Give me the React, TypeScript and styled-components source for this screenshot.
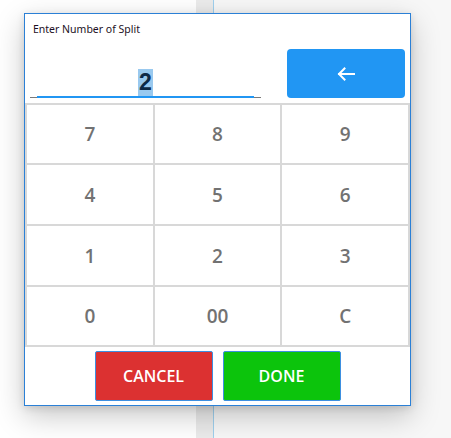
import React, { useState } from 'react';
import styled, { createGlobalStyle } from 'styled-components';

const GlobalStyle = createGlobalStyle`
  *, *::before, *::after {
    box-sizing: border-box;
  }
  html, body {
    margin: 0;
    padding: 0;
    background: #ffffff;
  }
  #root {
    width: 451px;
    height: 438px;
  }
`;

// backdrop: the page that sits behind the popup
const Page = styled.div`
  position: relative;
  width: 451px;
  height: 438px;
  display: flex;
  overflow: hidden;
`;

const LeftPane = styled.div`
  width: 196px;
  background: #ffffff;
`;

const Gutter = styled.div`
  width: 17px;
  background: #ebebeb;
`;

const Divider = styled.div`
  width: 1px;
  background: #9fd0ee;
`;

const RightPane = styled.div`
  flex: 1;
  background: #f7f7f7;
`;

const Dialog = styled.div`
  position: absolute;
  left: 24px;
  top: 13px;
  width: 387px;
  height: 393px;
  background: #ffffff;
  border: 1px solid #2b80d6;
  box-shadow: 0 10px 28px rgba(0, 0, 0, 0.22), 0 2px 8px rgba(0, 0, 0, 0.12);
  display: flex;
  flex-direction: column;
  font-family: "Open Sans", "Noto Sans", sans-serif;
`;

const Header = styled.div`
  height: 89px;
  flex-shrink: 0;
  padding: 8px 5px 0 8px;
  display: flex;
  flex-direction: column;
`;

const Title = styled.div`
  font-family: "Noto Sans", sans-serif;
  font-size: 10.5px;
  color: #1c1024;
  line-height: 14px;
`;

const InputRow = styled.div`
  margin-top: 13px;
  display: flex;
  align-items: flex-end;
  justify-content: space-between;
`;

const Field = styled.div`
  position: relative;
  width: 231px;
  margin-left: -3px;
  height: 36px;
  border-bottom: 1px solid #7a7a7a;
  display: flex;
  align-items: flex-end;
  justify-content: center;

  &::after {
    content: '';
    position: absolute;
    left: 7px;
    right: 7px;
    bottom: -1px;
    height: 2px;
    background: #2196f3;
  }
`;

const Value = styled.span`
  font-family: "Liberation Sans", Arial, sans-serif;
  font-weight: 700;
  font-size: 23px;
  line-height: 27px;
  color: #0e2a47;
  background: #99c9ef;
  padding: 0 1px;
  margin-bottom: 1px;
`;

const BackButton = styled.button`
  width: 118px;
  height: 49px;
  border: none;
  border-radius: 4px;
  background: #2196f3;
  display: flex;
  align-items: center;
  justify-content: center;
  padding: 0;
  cursor: pointer;
`;

const Pad = styled.div`
  display: grid;
  grid-template-columns: repeat(3, 1fr);
  grid-template-rows: 58px 59px 59px 58px;
  gap: 2px;
  padding: 2px;
  background: #d8d8d8;
`;

const Key = styled.button`
  border: none;
  background: #ffffff;
  font-family: "Open Sans", sans-serif;
  font-weight: 600;
  font-size: 19px;
  color: #727272;
  padding: 0;
  cursor: pointer;
`;

const Footer = styled.div`
  flex: 1;
  display: flex;
  justify-content: center;
  align-items: center;
  gap: 10px;
`;

const ActionButton = styled.button<{ $tone: 'cancel' | 'done' }>`
  width: 118px;
  height: 50px;
  border: 1px solid #3d8fe0;
  border-radius: 2px;
  background: ${p => (p.$tone === 'cancel' ? '#dc3131' : '#0cc40c')};
  color: #ffffff;
  font-family: "Open Sans", sans-serif;
  font-weight: 600;
  font-size: 16px;
  cursor: pointer;
`;

const keys = ['7', '8', '9', '4', '5', '6', '1', '2', '3', '0', '00', 'C'];

function BackArrow() {
  return (
    <svg width="18" height="14" viewBox="0 0 18 14" fill="none">
      <path d="M17 7H2M7.5 1.5 2 7l5.5 5.5" stroke="#ffffff" strokeWidth="2" strokeLinecap="square" />
    </svg>
  );
}

export default function App() {
  const [value, setValue] = useState('2');

  const press = (k: string) => {
    if (k === 'C') setValue('');
    else setValue(v => v + k);
  };

  return (
    <>
      <GlobalStyle />
      <Page>
        <LeftPane />
        <Gutter />
        <Divider />
        <RightPane />
        <Dialog>
          <Header>
            <Title>Enter Number of Split</Title>
            <InputRow>
              <Field>
                <Value>{value}</Value>
              </Field>
              <BackButton onClick={() => setValue(v => v.slice(0, -1))}>
                <BackArrow />
              </BackButton>
            </InputRow>
          </Header>
          <Pad>
            {keys.map(k => (
              <Key key={k} onClick={() => press(k)}>
                {k}
              </Key>
            ))}
          </Pad>
          <Footer>
            <ActionButton $tone="cancel">CANCEL</ActionButton>
            <ActionButton $tone="done">DONE</ActionButton>
          </Footer>
        </Dialog>
      </Page>
    </>
  );
}
